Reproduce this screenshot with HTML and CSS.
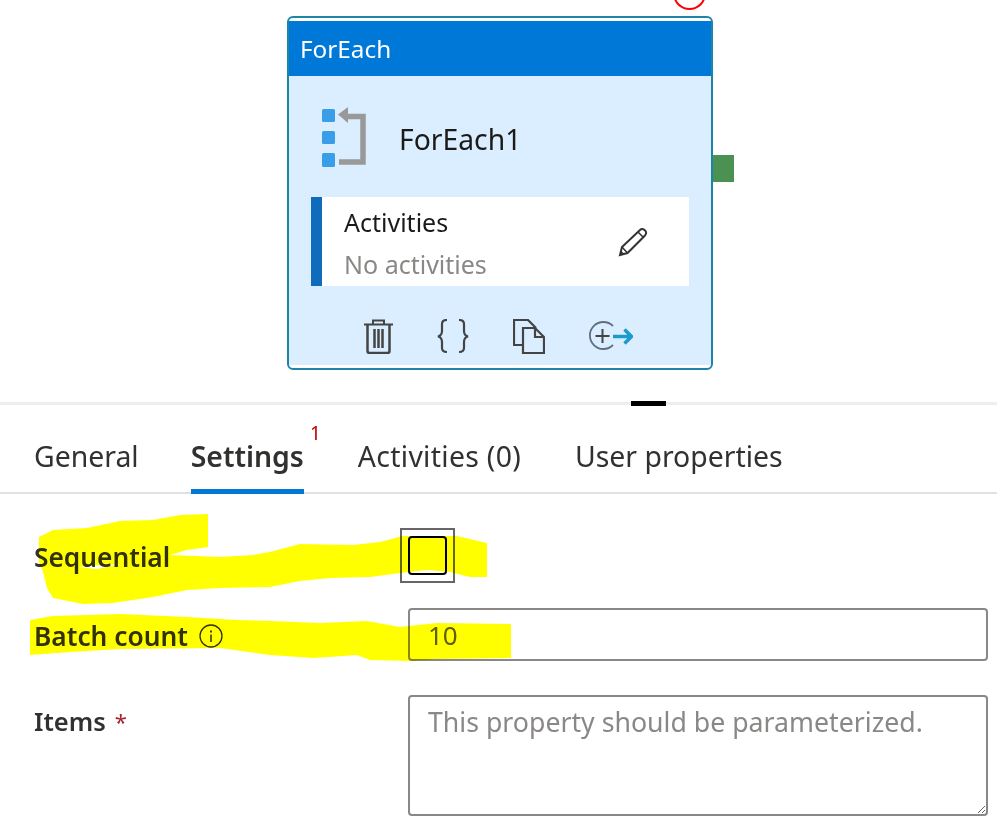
FILE: index.html
```html
<!DOCTYPE html>
<html lang="en">

<head>
  <meta charset="UTF-8">
  <meta name="viewport" content="width=device-width, initial-scale=1.0">
  <title>ForEach settings</title>
  <link rel="stylesheet" href="styles.css">
</head>

<body>
  <div id="canvas">
    <div class="error-ring"></div>
    <div class="node">
      <div class="node-header">ForEach</div>
      <div class="node-body">
        <div class="node-title">
          <svg class="foreach-icon" width="46" height="60" viewBox="0 0 46 60">
            <rect x="1" y="2" width="13" height="13" rx="1.5" fill="#3a9de8" />
            <rect x="1" y="24" width="13" height="13" rx="1.5" fill="#3a9de8" />
            <rect x="1" y="46" width="13" height="14" rx="1.5" fill="#3a9de8" />
            <path d="M26 9.5H42V55H18" fill="none" stroke="#999" stroke-width="5.5" />
            <path d="M17 7.5L27 0V16Z" fill="#999" />
          </svg>
          <span>ForEach1</span>
        </div>
        <div class="activities">
          <div class="activities-text">
            <div class="activities-name">Activities</div>
            <div class="activities-count">No activities</div>
          </div>
          <svg class="pencil" width="30" height="30" viewBox="0 0 30 30">
            <path d="M2 28L4 20L22 3Q24 1 26.500 3L27.500 4Q29 6 27 8.500L9.500 26Z" fill="none" stroke="#333" stroke-width="2" />
            <path d="M4 20L9.500 26M20 5L25.500 10.500" fill="none" stroke="#333" stroke-width="1.500" />
            <path d="M2 28L2.800 23.500L6.500 27Z" fill="#333" />
          </svg>
        </div>
        <div class="node-actions">
          <svg width="29" height="35" viewBox="0 0 29 35" fill="none" stroke="#444" stroke-width="2">
            <path d="M0 5.500H29M9 5.500V1.500H20V5.500" />
            <path d="M3.500 5.500V32Q3.500 34 5.500 34H23.500Q25.500 34 25.500 32V5.500" stroke-width="2.500" />
            <path d="M10.500 10V29M14.500 10V29M18.500 10V29" stroke-width="2.500" />
          </svg>
          <svg width="32" height="35" viewBox="0 0 32 35" fill="none" stroke="#444" stroke-width="2.200">
            <path d="M10 1Q5 1 5 5V12Q5 16.500 1 17.500Q5 18.500 5 23V29Q5 33 10 33" />
            <path d="M22 1Q27 1 27 5V12Q27 16.500 31 17.500Q27 18.500 27 23V29Q27 33 22 33" />
          </svg>
          <svg width="32" height="35" viewBox="0 0 32 35" fill="none" stroke="#444" stroke-width="2.200">
            <path d="M10 26H1V1H15L23 9" />
            <path d="M10 9H22L31 18V34H10Z" fill="#dbeeff" />
            <path d="M22 9V18H31" />
          </svg>
          <svg width="44" height="30" viewBox="0 0 44 30" fill="none">
            <path d="M24 5A13.500 13.500 0 1 0 24 24" stroke="#5f6f80" stroke-width="1.800" />
            <path d="M13.500 8V22M6.500 15H20.500" stroke="#444" stroke-width="2" />
            <path d="M24 15.500H42M35.500 8.500L42.500 15.500L35.500 22.500" stroke="#1a9bcb" stroke-width="3.500" />
          </svg>
        </div>
      </div>
      <div class="port"></div>
    </div>
    <div class="splitter-grip"></div>
  </div>

  <div class="tabs">
    <div class="tab">General</div>
    <div class="tab active">Settings<span class="tab-badge">1</span></div>
    <div class="tab wide">Activities (0)</div>
    <div class="tab last">User properties</div>
  </div>

  <div class="form">
    <label class="field-label">Sequential</label>
    <div class="check-ring"><input class="check" type="checkbox"></div>

    <label class="field-label batch">Batch count
      <svg class="info" width="24" height="24" viewBox="0 0 24 24" fill="none" stroke="#333">
        <circle cx="12" cy="12" r="11" stroke-width="1.300" />
        <path d="M12 10.500V18" stroke-width="1.500" />
        <path d="M12 6.500V8.500" stroke-width="1.800" />
      </svg>
    </label>
    <input class="text-input" type="text" value="10">

    <label class="field-label items">Items <span class="required">*</span></label>
    <textarea class="text-area" placeholder="This property should be parameterized."></textarea>
  </div>

  <!-- marker scribbles on top of the screenshot -->
  <svg class="highlight" width="997" height="834" viewBox="0 0 997 834">
    <path fill="#ffff00" fill-rule="evenodd" d="M39 537L53 530L87 528L120 521L153 520L180 515L208 514L208 547L187 550L170 555L220 557L253 555L270 552L300 544L353 545L380 542L403 536L457 536L487 543L487 577L470 577L450 572L427 570L400 573L370 577L330 578L300 581L270 587L220 588L187 590L153 597L113 603L83 604L53 598L47 588L43 572L39 562Z M79 567L97 569L120 564L100 565Z" />
    <path fill="#ffff00" d="M30 620L53 616L120 614L187 617L237 620L270 621L320 623L367 621L400 627L437 623L511 624L511 658L437 659L410 661L370 660L357 655L313 658L270 655L220 648L120 649L70 652L30 655Z" />
  </svg>
</body>

</html>
```

FILE: styles.css
```css
body {
  font-family: "Noto Sans", Arial, sans-serif;
  margin: 0;
  padding: 0;
  background-color: #fff;
  color: #323130;
  height: 834px;
  overflow: hidden;
  position: relative;
}

#canvas {
  position: relative;
  height: 402px;
  border-bottom: 3px solid #eee;
}

.error-ring {
  position: absolute;
  left: 673px;
  top: -23px;
  width: 29px;
  height: 29px;
  border: 2px solid #f00;
  border-radius: 50%;
}

.splitter-grip {
  position: absolute;
  left: 631px;
  top: 401px;
  width: 35px;
  height: 5px;
  background-color: #000;
}

.node {
  position: absolute;
  left: 287px;
  top: 16px;
  width: 422px;
  background-color: #fff;
  border: 2px solid #1f85a8;
  border-radius: 6px;
  padding: 3px 0;
}

.node-header {
  height: 55px;
  background-color: #0078d7;
  color: #fff;
  font-size: 24.300px;
  line-height: 56px;
  padding-left: 11px;
}

.node-body {
  background-color: #dbeeff;
  height: 289px;
  padding: 0 22px;
}

.node-title {
  display: flex;
  align-items: center;
  height: 121px;
  padding-left: 10px;
  color: #1b1a19;
  font-size: 28.300px;
}

.foreach-icon {
  margin-right: 32px;
}

.node-title span {
  margin-top: 4px;
}

.activities {
  display: flex;
  align-items: center;
  height: 89px;
  background-color: #fff;
  border-left: 11px solid #0f6cbd;
}

.activities-text {
  flex: 1;
  padding: 2px 0 0 22px;
  font-size: 25px;
}

.activities-name {
  color: #1b1a19;
  line-height: 42px;
}

.activities-count {
  color: #8a8886;
  line-height: 42px;
}

.pencil {
  margin-right: 41px;
}

.node-actions {
  display: flex;
  align-items: center;
  gap: 44px;
  height: 79px;
  padding: 21px 0 0 53px;
  box-sizing: border-box;
}

.port {
  position: absolute;
  left: 424px;
  top: 137px;
  width: 21px;
  height: 27px;
  background-color: #4a9152;
}

.tabs {
  display: flex;
  gap: 52px;
  height: 87px;
  padding-left: 34px;
  border-bottom: 2px solid #e1e1e1;
  font-size: 28.400px;
}

.tab {
  line-height: 102px;
  height: 84px;
  position: relative;
}

.tab.active {
  font-weight: 600;
  border-bottom: 5px solid #0078d7;
}

.tab.wide {
  margin-left: 2px;
  letter-spacing: 0.300px;
}

.tab.last {
  margin-left: 2px;
}

.tab-badge {
  position: absolute;
  right: -17px;
  top: 16px;
  color: #c00000;
  font-size: 19px;
  font-weight: 400;
  line-height: 24px;
}

.form {
  display: grid;
  grid-template-columns: 374px 580px;
  padding: 34px 0 0 34px;
}

.field-label {
  display: flex;
  align-items: center;
  gap: 11px;
  padding-top: 3px;
  font-size: 26.300px;
  font-weight: 600;
}

.field-label.batch {
  margin-top: 25px;
}

.field-label.items {
  align-items: flex-start;
  gap: 9px;
  margin-top: 34px;
  padding-top: 0;
  font-size: 25.500px;
  line-height: 52px;
}

.required {
  color: #a4262c;
  font-size: 22px;
  font-weight: 400;
}

.info {
  flex: none;
}

.check-ring {
  width: 51px;
  height: 51px;
  margin-left: -8px;
  border: 2px solid #666;
  padding: 0;
  display: flex;
  align-items: center;
  justify-content: center;
}

.check {
  display: block;
  appearance: none;
  box-sizing: border-box;
  width: 39px;
  height: 39px;
  margin: 0;
  background: #fff;
  border: 2px solid #000;
  border-radius: 4px;
}

.text-input,
.text-area {
  box-sizing: border-box;
  display: block;
  width: 580px;
  margin: 0;
  font-family: "Noto Sans", Arial, sans-serif;
  font-size: 26px;
  color: #605e5c;
  border: 2px solid #8a8886;
  border-radius: 4px;
  background: #fff;
  padding: 0 18px;
}

.text-input {
  height: 53px;
  margin-top: 25px;
}

.text-area {
  height: 121px;
  margin-top: 34px;
  padding: 6px 18px;
  font-size: 26.700px;
  resize: both;
}

.text-area::placeholder {
  color: #8a8886;
  opacity: 1;
}

.highlight {
  position: absolute;
  left: 0;
  top: 0;
  mix-blend-mode: multiply;
  pointer-events: none;
}
```
